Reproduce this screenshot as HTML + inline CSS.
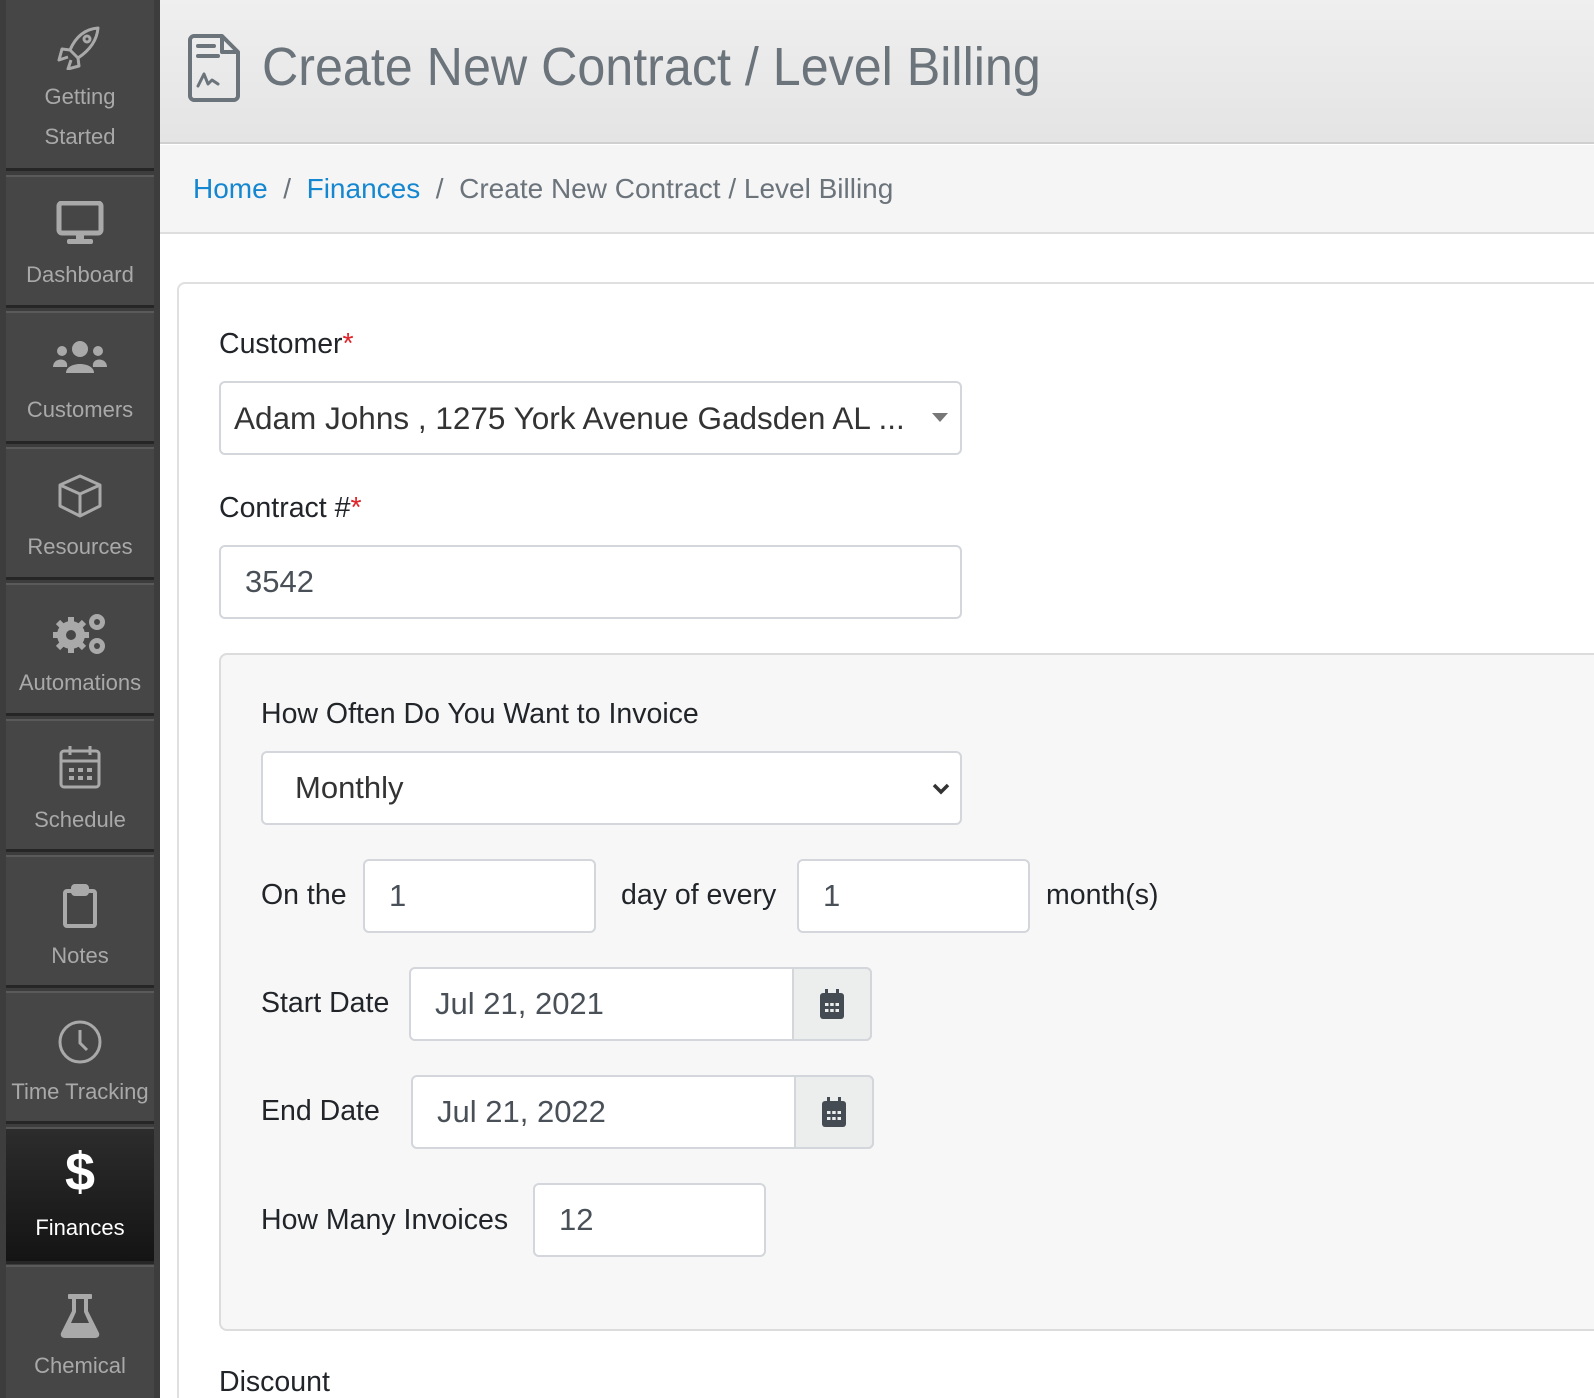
<!DOCTYPE html>
<html style="overflow:hidden;height:1398px"><head><meta charset="utf-8"><style>
*{margin:0;padding:0;box-sizing:border-box}
body{width:1594px;height:1398px;overflow:hidden;background:#fff;font-family:"Liberation Sans",sans-serif;position:relative}
.sb{position:absolute;left:0;top:0;width:160px;height:1398px;background:#3d3d3d;overflow:hidden}
.it{position:absolute;left:6px;width:148px;background:#464646;border-top:2px solid #5a5a5a;border-bottom:3px solid #262626;color:#a9a9a9;text-align:center;font-size:22px}
.it svg{position:absolute;left:50%;transform:translateX(-50%)}
.it .t{position:absolute;left:0;right:0}
.hdr{position:absolute;left:160px;top:0;width:1434px;height:144px;background:linear-gradient(#efefef,#e4e4e4);border-bottom:2px solid #cfcfcf}
.title{position:absolute;left:262px;top:36px;font-size:54px;color:#6b737b;white-space:nowrap;transform:scaleX(.93);transform-origin:left}
.bc{position:absolute;left:160px;top:145px;width:1434px;height:89px;background:#f5f5f5;border-bottom:2px solid #dedede}
.bct{position:absolute;left:193px;top:173px;font-size:28px;color:#6b737b;white-space:nowrap}
.bct a{color:#1487d0;text-decoration:none}
.card{position:absolute;left:177px;top:282px;width:1417px;height:1116px;border:2px solid #e0e0e0;border-right:none;border-bottom:none;border-radius:8px 0 0 0;background:#fff}
.wrap{position:absolute;left:0;top:0;width:1594px;height:1398px;overflow:hidden}
.lbl{position:absolute;font-size:28.5px;color:#212529;white-space:nowrap}
.lbl i{color:#e0242a;font-style:normal}
.in{position:absolute;background:#fff;border:2px solid #d3d6da;border-radius:6px;font-size:31px;color:#495057;padding-left:24px;display:flex;align-items:center;white-space:nowrap}
.panel{position:absolute;left:219px;top:653px;width:1375px;height:678px;background:#f7f7f7;border:2px solid #dcdcdc;border-right:none;border-radius:8px 0 0 8px}
.cal{position:absolute;top:-2px;right:-2px;width:80px;bottom:-2px;background:#eceded;border:2px solid #d3d6da;border-radius:0 6px 6px 0;display:flex;align-items:center;justify-content:center}
</style></head><body>
<div class="wrap">
<div class="sb">
 <div class="it" style="top:-2px;height:173px"><svg style="top:26px" width="48" height="44" viewBox="0 0 48 44" fill="none" stroke="#a9a9a9" stroke-width="3" stroke-linejoin="round"><path d="M22 32 L14 24 C20 10 30 3 42 2 C41 14 34 24 22 32Z"/><circle cx="31" cy="13" r="3"/><path d="M14 24 L6 23 L3 34 L12 31"/><path d="M22 32 L23 40 L12 43 L15 34"/></svg><div class="t" style="top:77px;line-height:40px">Getting<br>Started</div></div>
 <div class="it" style="top:175px;height:133px"><svg style="top:24px" width="48" height="44" viewBox="0 0 48 44"><rect x="3" y="2" width="42" height="30" rx="3" fill="none" stroke="#a9a9a9" stroke-width="5"/><rect x="20" y="32" width="8" height="6" fill="#a9a9a9"/><rect x="11" y="38" width="26" height="5" rx="2" fill="#a9a9a9"/></svg><div class="t" style="top:85px">Dashboard</div></div>
 <div class="it" style="top:311px;height:133px"><svg style="top:26px" width="58" height="40" viewBox="0 0 58 40" fill="#a9a9a9"><circle cx="29" cy="10" r="8"/><path d="M15 34 C15 22 43 22 43 34Z"/><circle cx="11" cy="12" r="5"/><circle cx="47" cy="12" r="5"/><path d="M2 28 C2 18 18 18 16 28Z"/><path d="M56 28 C56 18 40 18 42 28Z"/></svg><div class="t" style="top:84px">Customers</div></div>
 <div class="it" style="top:447px;height:133px"><svg style="top:24px" width="48" height="46" viewBox="0 0 48 46" fill="none" stroke="#a9a9a9" stroke-width="3" stroke-linejoin="round"><path d="M24 3 L44 12 L44 33 L24 43 L4 33 L4 12Z"/><path d="M4 12 L24 21 L44 12 M24 21 L24 43"/></svg><div class="t" style="top:85px">Resources</div></div>
 <div class="it" style="top:583px;height:133px"><svg style="top:26px" width="58" height="46" viewBox="0 0 58 46" fill="#a9a9a9"><circle cx="20" cy="24" r="14"/><g stroke="#a9a9a9" stroke-width="6"><path d="M20 6V42M2 24H38M7 11L33 37M33 11L7 37"/></g><circle cx="20" cy="24" r="5" fill="#464646"/><circle cx="46" cy="11" r="8"/><circle cx="46" cy="11" r="3" fill="#464646"/><circle cx="46" cy="35" r="8"/><circle cx="46" cy="35" r="3" fill="#464646"/></svg><div class="t" style="top:85px">Automations</div></div>
 <div class="it" style="top:719px;height:133px"><svg style="top:24px" width="44" height="46" viewBox="0 0 44 46" fill="none" stroke="#a9a9a9" stroke-width="3"><rect x="3" y="6" width="38" height="36" rx="3"/><path d="M3 16H41M12 1V10M32 1V10"/><g fill="#a9a9a9" stroke="none"><rect x="11" y="23" width="5" height="4"/><rect x="20" y="23" width="5" height="4"/><rect x="29" y="23" width="5" height="4"/><rect x="11" y="31" width="5" height="4"/><rect x="20" y="31" width="5" height="4"/><rect x="29" y="31" width="5" height="4"/></g></svg><div class="t" style="top:86px">Schedule</div></div>
 <div class="it" style="top:855px;height:133px"><svg style="top:26px" width="40" height="46" viewBox="0 0 40 46" fill="none" stroke="#a9a9a9" stroke-width="4"><rect x="5" y="8" width="30" height="35" rx="2"/><rect x="13" y="3" width="14" height="8" rx="2" fill="#a9a9a9"/></svg><div class="t" style="top:86px">Notes</div></div>
 <div class="it" style="top:991px;height:133px"><svg style="top:26px" width="46" height="46" viewBox="0 0 46 46" fill="none" stroke="#a9a9a9" stroke-width="3"><circle cx="23" cy="23" r="20"/><path d="M23 11V24L30 31"/></svg><div class="t" style="top:86px">Time Tracking</div></div>
 <div class="it" style="top:1127px;height:137px;background:linear-gradient(#2c2c2c,#141414);border-top-color:#555;color:#fff"><div class="t" style="top:12px;font-size:54px;font-weight:bold;color:#fff">$</div><div class="t" style="top:86px">Finances</div></div>
 <div class="it" style="top:1265px;height:133px;border-bottom:none"><svg style="top:26px" width="42" height="46" viewBox="0 0 42 46" fill="#a9a9a9"><rect x="9" y="1" width="24" height="5" rx="1"/><path d="M13 5H29V18L40 40C41 43 39 45 36 45H6C3 45 1 43 2 40L13 18Z"/><path d="M17 6H25V19L30 30H12L17 19Z" fill="#464646"/></svg><div class="t" style="top:86px">Chemical</div></div>
</div>
<div class="hdr"></div>
<svg style="position:absolute;left:188px;top:34px" width="52" height="68" viewBox="0 0 52 68" fill="none" stroke="#6b737b" stroke-width="4" stroke-linejoin="round"><path d="M6 2H34L50 18V62C50 64 48 66 46 66H6C4 66 2 64 2 62V6C2 4 4 2 6 2Z"/><path d="M34 2V18H50"/><path d="M10 12H26M10 22H30" stroke-linecap="round"/><path d="M10 52L16 40L20 50L24 46L30 50" stroke-width="3" stroke-linecap="round"/></svg>
<div class="title">Create New Contract / Level Billing</div>
<div class="bc"></div>
<div class="bct"><a>Home</a>&nbsp; / &nbsp;<a>Finances</a>&nbsp; / &nbsp;Create New Contract / Level Billing</div>
<div class="card"></div>
<div class="lbl" style="left:219px;top:328px">Customer<i>*</i></div>
<div class="in" style="left:219px;top:381px;width:743px;height:74px;font-size:31.5px;color:#333;padding-left:13px">Adam Johns , 1275 York Avenue Gadsden AL ...<svg style="position:absolute;right:12px;top:30px" width="16" height="9"><path d="M0 0H16L8 9Z" fill="#777"/></svg></div>
<div class="lbl" style="left:219px;top:492px">Contract #<i>*</i></div>
<div class="in" style="left:219px;top:545px;width:743px;height:74px">3542</div>
<div class="panel"></div>
<div class="lbl" style="left:261px;top:698px">How Often Do You Want to Invoice</div>
<div class="in" style="left:261px;top:751px;width:701px;height:74px;padding-left:32px;color:#333">Monthly<svg style="position:absolute;right:10px;top:30px" width="18" height="12"><path d="M2 2L9 9L16 2" fill="none" stroke="#333" stroke-width="3.5"/></svg></div>
<div class="lbl" style="left:261px;top:879px">On the</div>
<div class="in" style="left:363px;top:859px;width:233px;height:74px">1</div>
<div class="lbl" style="left:621px;top:879px">day of every</div>
<div class="in" style="left:797px;top:859px;width:233px;height:74px">1</div>
<div class="lbl" style="left:1046px;top:879px">month(s)</div>
<div class="lbl" style="left:261px;top:987px">Start Date</div>
<div class="in" style="left:409px;top:967px;width:463px;height:74px">Jul 21, 2021<div class="cal"><svg width="26" height="32" viewBox="0 0 26 32"><rect x="1" y="5" width="24" height="26" rx="3" fill="#454b52"/><rect x="6" y="1" width="3" height="7" fill="#454b52"/><rect x="17" y="1" width="3" height="7" fill="#454b52"/><g fill="#eceded"><rect x="6" y="15" width="3.5" height="3"/><rect x="11.2" y="15" width="3.5" height="3"/><rect x="16.5" y="15" width="3.5" height="3"/><rect x="6" y="21" width="3.5" height="3"/><rect x="11.2" y="21" width="3.5" height="3"/><rect x="16.5" y="21" width="3.5" height="3"/></g></svg></div></div>
<div class="lbl" style="left:261px;top:1095px">End Date</div>
<div class="in" style="left:411px;top:1075px;width:463px;height:74px">Jul 21, 2022<div class="cal"><svg width="26" height="32" viewBox="0 0 26 32"><rect x="1" y="5" width="24" height="26" rx="3" fill="#454b52"/><rect x="6" y="1" width="3" height="7" fill="#454b52"/><rect x="17" y="1" width="3" height="7" fill="#454b52"/><g fill="#eceded"><rect x="6" y="15" width="3.5" height="3"/><rect x="11.2" y="15" width="3.5" height="3"/><rect x="16.5" y="15" width="3.5" height="3"/><rect x="6" y="21" width="3.5" height="3"/><rect x="11.2" y="21" width="3.5" height="3"/><rect x="16.5" y="21" width="3.5" height="3"/></g></svg></div></div>
<div class="lbl" style="left:261px;top:1204px">How Many Invoices</div>
<div class="in" style="left:533px;top:1183px;width:233px;height:74px">12</div>
<div class="lbl" style="left:219px;top:1366px;line-height:32px">Discount</div>
</div>
</body></html>
